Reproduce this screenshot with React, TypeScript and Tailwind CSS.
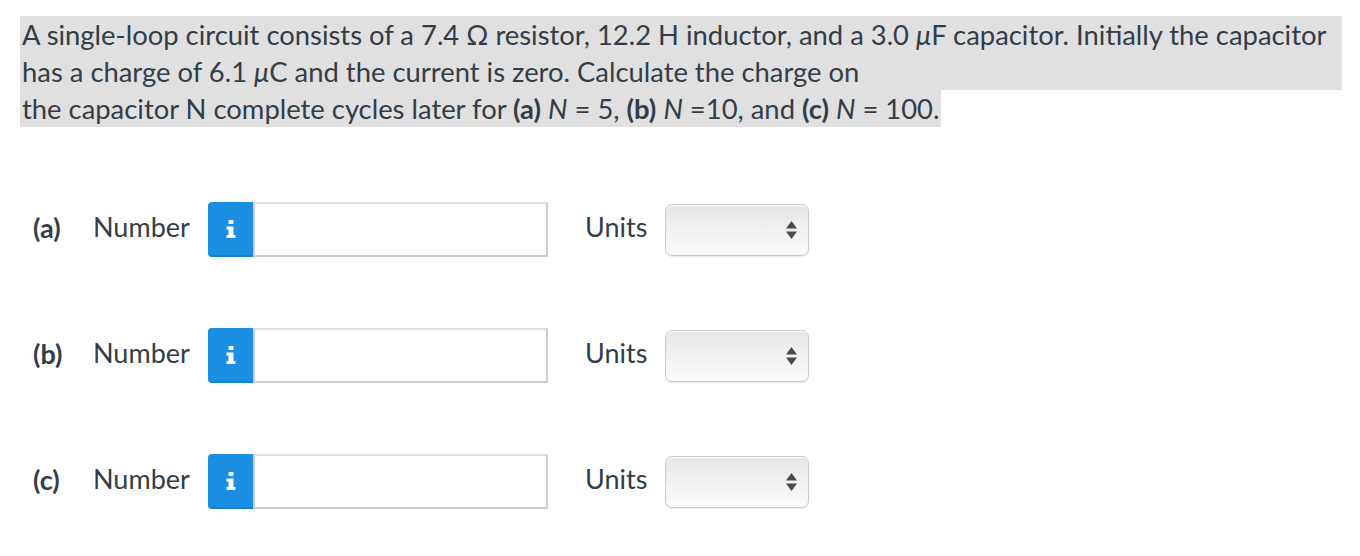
import React from "react";

function InfoIcon() {
  return (
    <svg width="10" height="18" viewBox="0 0 10 18" fill="white" aria-hidden="true">
      <rect x="2.5" y="0" width="5" height="4" rx="1" />
      <path d="M0.5 6.5 H7.5 V15 H9.5 V18 H0.5 V15 H2.5 V9.5 H0.5 Z" />
    </svg>
  );
}

function SortArrows() {
  return (
    <svg width="11" height="18" viewBox="0 0 11 18" fill="#4a4a4a" aria-hidden="true">
      <path d="M5.5 0 L11 7.5 H0 Z" />
      <path d="M0 10.5 H11 L5.5 18 Z" />
    </svg>
  );
}

type RowProps = { part: string };

function AnswerRow({ part }: RowProps) {
  return (
    <div className="flex items-center h-[55px] text-[27px]">
      <span className="font-bold w-[60px] -mt-[2px]">({part})</span>
      <span className="w-[115px] -mt-[4px]">Number</span>
      <div className="flex h-[55px]">
        <button
          type="button"
          className="w-[45px] h-[55px] bg-[#1b8fe1] rounded-l-[4px] flex items-center justify-center border-b-2 border-[#1783cf]"
          aria-label="info"
        >
          <InfoIcon />
        </button>
        <input
          type="text"
          className="w-[295px] h-[55px] border-2 border-[#cdcdcd] border-t-[#dedede] bg-white outline-none"
        />
      </div>
      <span className="ml-[37px] w-[80px] -mt-[4px]">Units</span>
      <div className="relative w-[144px] h-[52px] rounded-[7px] border border-[#cbcbcb] bg-gradient-to-b from-[#e6e6e6] to-[#fbfbfb] shadow-[inset_0_1px_0_#fff,0_1px_1px_rgba(0,0,0,0.08)]">
        <div className="absolute right-[11px] top-1/2 -translate-y-1/2 flex">
          <SortArrows />
        </div>
      </div>
    </div>
  );
}

export default function App() {
  return (
    <div
      className="w-[1360px] h-[556px] bg-white text-[#333d47] overflow-hidden"
      style={{ fontFamily: "Lato, 'Open Sans', sans-serif" }}
    >
      <div className="pt-[16px] pl-[20px] pr-[18px] text-[27.4px] leading-[37px]">
        <div className="bg-[#e0e0e0] pl-[2px] whitespace-nowrap">
          A single-loop circuit consists of a 7.4 Ω resistor, 12.2 H inductor, and a 3.0 <i>μ</i>F capacitor. Initially the capacitor
          <br />
          has a charge of 6.1 <i>μ</i>C and the current is zero. Calculate the charge on
        </div>
        <span className="bg-[#e0e0e0] inline-block pl-[2px] pr-[2px]">
          the capacitor N complete cycles later for <b>(a)</b> <i>N</i> = 5, <b>(b)</b> <i>N</i> =10, and <b>(c)</b> <i>N</i> = 100.
        </span>
      </div>

      <div className="pl-[33px] mt-[75px] flex flex-col gap-[71px]">
        <AnswerRow part="a" />
        <AnswerRow part="b" />
        <AnswerRow part="c" />
      </div>
    </div>
  );
}
